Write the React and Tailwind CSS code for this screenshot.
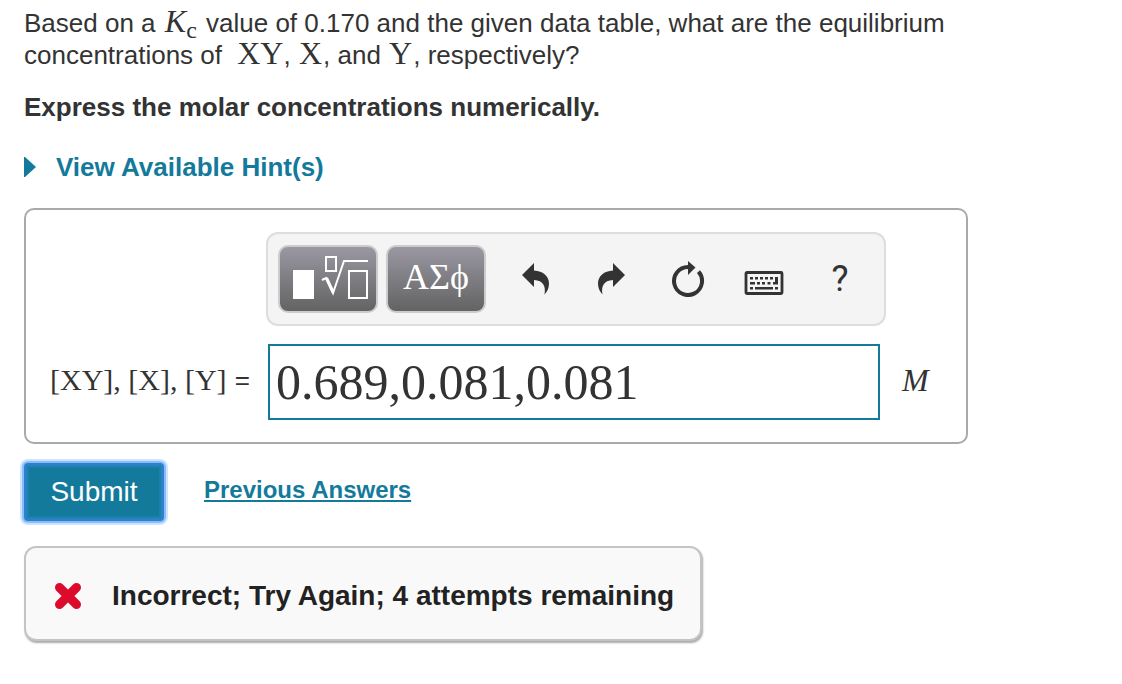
import { useState } from "react";

const TOOL_BUTTON = "flex h-full w-[76px] items-center justify-center text-[#333]";
const MATH = "font-['Liberation_Serif',serif] text-[32px] leading-4";

function TemplatesIcon() {
  return (
    <svg width="96" height="64" viewBox="0 0 96 64" fill="none" stroke="#fff" aria-hidden="true">
      <rect x="13" y="23" width="21" height="29" fill="#fff" stroke="none" />
      <rect x="46" y="10" width="10" height="14" strokeWidth="2" />
      <path d="M42 33l4-2 7 15 11-32h24" strokeWidth="2" />
      <path d="M46.500 31l6.500 14" strokeWidth="3" />
      <rect x="69" y="24" width="18" height="27" strokeWidth="2" />
    </svg>
  );
}

function UndoIcon() {
  return (
    <svg width="28" height="32" viewBox="0 0 28 32" fill="currentColor" aria-hidden="true">
      <path d="M0 12L12 0v7.500c9 .5 15 5.500 15 13 0 4-1.500 8-4.500 11 1.500-8-1-14-10.500-14.500V24z" />
    </svg>
  );
}

function RedoIcon() {
  return (
    <svg width="28" height="32" viewBox="0 0 28 32" fill="currentColor" aria-hidden="true">
      <path d="M27 12L15 0v7.500C6 8 0 13 0 20.500c0 4 1.500 8 4.500 11-1.500-8 1-14 10.500-14.500V24z" />
    </svg>
  );
}

function ResetIcon() {
  return (
    <svg width="34" height="36" viewBox="0 0 34 36" aria-hidden="true">
      <path d="M17 6A14 14 0 1 0 27.500 10.700" fill="none" stroke="currentColor" strokeWidth="4" />
      <path d="M17 0l7.500 6.500L17 14z" fill="currentColor" />
    </svg>
  );
}

function KeyboardIcon() {
  return (
    <svg width="40" height="24" viewBox="0 0 40 24" aria-hidden="true">
      <rect x="2" y="1.500" width="36" height="21" rx="1" fill="none" stroke="currentColor" strokeWidth="2.800" />
      <g fill="currentColor">
        <path d="M6 6h3v2.500H6zM11 6h3v2.500h-3zM16 6h3v2.500h-3zM21 6h3v2.500h-3zM26 6h3v2.500h-3z" />
        <path d="M31 6h3v7.500h-5V11h2zM6 11h5v2.500H6zM13 11h3v2.500h-3zM18 11h3v2.500h-3zM23.500 11h3v2.500h-3z" />
        <path d="M6 16h3v2.500H6zM11 16h18v2.500H11zM31 16h3v2.500h-3z" />
      </g>
    </svg>
  );
}

function Toolbar() {
  return (
    <div className="flex h-[94px] items-center rounded-xl border-2 border-[#ddd] bg-[#f4f4f4] pl-[10px]">
      <div className="flex gap-2 pr-3">
        <button
          aria-label="Templates"
          className="h-[68px] w-[100px] overflow-hidden rounded-[10px] border-2 border-[#ccc] bg-linear-to-b from-[#9b98a3] to-[#636363]"
        >
          <TemplatesIcon />
        </button>
        <button
          aria-label="Symbols"
          className="h-[68px] w-[100px] rounded-[10px] border-2 border-[#ccc] bg-linear-to-b from-[#9b98a3] to-[#636363] pb-1 font-['Liberation_Serif',serif] text-4xl text-white"
        >
          ΑΣϕ
        </button>
      </div>
      <button aria-label="Undo" className={TOOL_BUTTON}>
        <UndoIcon />
      </button>
      <button aria-label="Redo" className={TOOL_BUTTON}>
        <RedoIcon />
      </button>
      <button aria-label="Reset" className={TOOL_BUTTON}>
        <ResetIcon />
      </button>
      <button aria-label="Keyboard shortcuts" className={`${TOOL_BUTTON} pt-2`}>
        <KeyboardIcon />
      </button>
      <button aria-label="Help" className={`${TOOL_BUTTON} font-[Roboto,sans-serif] text-4xl`}>
        ?
      </button>
    </div>
  );
}

export default function App() {
  const [answer, setAnswer] = useState("0.689,0.081,0.081");

  return (
    <main className="bg-white px-6 pt-[7px] pb-8 font-['Liberation_Sans',Arial,sans-serif] text-[26px] leading-8 text-[#333]">
      <p className="max-w-[944px]">
        Based on a{" "}
        <span className={`${MATH} mx-0.5`}>
          <i>K</i>
          <sub className="text-2xl leading-[0]">c</sub>
        </span>{" "}
        value of 0.170 and the given data table, what are the equilibrium concentrations of{" "}
        <span className={`${MATH} ml-2`}>XY</span>, <span className={`${MATH} mx-px`}>X</span>, and{" "}
        <span className={`${MATH} mx-px`}>Y</span>, respectively?
      </p>

      <p className="mt-5 font-bold">Express the molar concentrations numerically.</p>

      <button className="mt-7 flex items-center font-bold text-[#147a9c]">
        <svg width="12" height="20" viewBox="0 0 12 20" fill="currentColor" className="mr-5" aria-hidden="true">
          <path d="M0 0h1l11 10L1 20H0z" />
        </svg>
        View Available Hint(s)
      </button>

      {/* Answer entry */}
      <section className="mt-[25px] grid max-w-[944px] grid-cols-[216px_1fr_56px] items-center gap-y-[18px] rounded-[10px] border-2 border-[#a9a9a9] py-[22px] pr-6 pl-6">
        <div className="col-start-2">
          <Toolbar />
        </div>
        <label
          htmlFor="answer"
          className="col-start-1 flex items-center justify-between pr-4 pb-1 font-['Liberation_Serif',serif] text-[30px] leading-none whitespace-nowrap"
        >
          <span>[XY], [X], [Y]</span>
          <span className="font-['Liberation_Sans',Arial,sans-serif] text-[26px]">=</span>
        </label>
        <input
          id="answer"
          type="text"
          value={answer}
          onChange={(e) => setAnswer(e.target.value)}
          className="mr-1.5 ml-0.5 h-[76px] min-w-0 border-2 border-[#147a9c] px-1.5 font-['Liberation_Serif',serif] text-[50px] outline-none"
        />
        <i className="pb-1 pl-4 font-['Liberation_Serif',serif] text-[32px] leading-none">M</i>
      </section>

      <div className="mt-[19px] flex items-center gap-10">
        <button className="h-[58px] w-[140px] rounded-[4px] border-3 border-[#2b82c6] bg-[#147a9c] text-[28px] text-white shadow-[0_0_0_2px_#8abbff,0_0_0_4px_#cde4ff,inset_0_0_0_2px_#1c7fae]">
          Submit
        </button>
        <a href="#previous" className="pb-1 text-2xl font-bold text-[#147a9c] underline">
          Previous Answers
        </a>
      </div>

      {/* Feedback */}
      <div
        role="alert"
        className="mt-[25px] flex min-h-[95px] w-fit items-center rounded-[12px] border-2 border-[#c4c4c4] bg-[#f9f9f9] pt-5 pr-[26px] pb-4 pl-7 text-[28px] font-bold text-[#222] shadow-[1px_2px_2px_#aaa]"
      >
        <svg width="28" height="28" viewBox="0 0 28 28" className="mr-[30px]" aria-hidden="true">
          <path
            d="M5.500 5.500l17 17M22.500 5.500l-17 17"
            stroke="#dc0b2c"
            strokeWidth="9"
            strokeLinecap="round"
          />
        </svg>
        Incorrect; Try Again; 4 attempts remaining
      </div>
    </main>
  );
}
